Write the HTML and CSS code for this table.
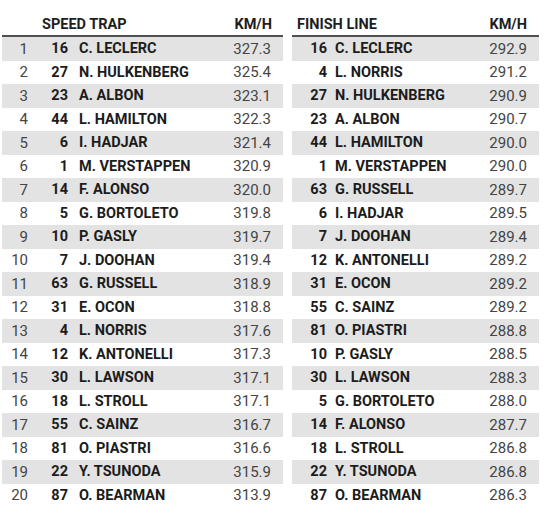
FILE: index.html
```html
<!DOCTYPE html>
<html lang="en">
<head>
<meta charset="UTF-8">
<meta name="viewport" content="width=device-width, initial-scale=1.0">
<title>Speed Trap / Finish Line</title>
<link rel="stylesheet" href="styles.css">
</head>
<body>

<div class="wrapper">
  <div class="board speed">
    <div class="head"><span class="title">SPEED TRAP</span><span class="unit">KM/H</span></div>
    <div class="row"><span class="pos">1</span><span class="no">16</span><span class="name">C. LECLERC</span><span class="kmh">327.3</span></div>
    <div class="row"><span class="pos">2</span><span class="no">27</span><span class="name">N. HULKENBERG</span><span class="kmh">325.4</span></div>
    <div class="row"><span class="pos">3</span><span class="no">23</span><span class="name">A. ALBON</span><span class="kmh">323.1</span></div>
    <div class="row"><span class="pos">4</span><span class="no">44</span><span class="name">L. HAMILTON</span><span class="kmh">322.3</span></div>
    <div class="row"><span class="pos">5</span><span class="no">6</span><span class="name">I. HADJAR</span><span class="kmh">321.4</span></div>
    <div class="row"><span class="pos">6</span><span class="no">1</span><span class="name">M. VERSTAPPEN</span><span class="kmh">320.9</span></div>
    <div class="row"><span class="pos">7</span><span class="no">14</span><span class="name">F. ALONSO</span><span class="kmh">320.0</span></div>
    <div class="row"><span class="pos">8</span><span class="no">5</span><span class="name">G. BORTOLETO</span><span class="kmh">319.8</span></div>
    <div class="row"><span class="pos">9</span><span class="no">10</span><span class="name">P. GASLY</span><span class="kmh">319.7</span></div>
    <div class="row"><span class="pos">10</span><span class="no">7</span><span class="name">J. DOOHAN</span><span class="kmh">319.4</span></div>
    <div class="row"><span class="pos">11</span><span class="no">63</span><span class="name">G. RUSSELL</span><span class="kmh">318.9</span></div>
    <div class="row"><span class="pos">12</span><span class="no">31</span><span class="name">E. OCON</span><span class="kmh">318.8</span></div>
    <div class="row"><span class="pos">13</span><span class="no">4</span><span class="name">L. NORRIS</span><span class="kmh">317.6</span></div>
    <div class="row"><span class="pos">14</span><span class="no">12</span><span class="name">K. ANTONELLI</span><span class="kmh">317.3</span></div>
    <div class="row"><span class="pos">15</span><span class="no">30</span><span class="name">L. LAWSON</span><span class="kmh">317.1</span></div>
    <div class="row"><span class="pos">16</span><span class="no">18</span><span class="name">L. STROLL</span><span class="kmh">317.1</span></div>
    <div class="row"><span class="pos">17</span><span class="no">55</span><span class="name">C. SAINZ</span><span class="kmh">316.7</span></div>
    <div class="row"><span class="pos">18</span><span class="no">81</span><span class="name">O. PIASTRI</span><span class="kmh">316.6</span></div>
    <div class="row"><span class="pos">19</span><span class="no">22</span><span class="name">Y. TSUNODA</span><span class="kmh">315.9</span></div>
    <div class="row"><span class="pos">20</span><span class="no">87</span><span class="name">O. BEARMAN</span><span class="kmh">313.9</span></div>
  </div>

  <div class="board finish">
    <div class="head"><span class="title">FINISH LINE</span><span class="unit">KM/H</span></div>
    <div class="row"><span class="no">16</span><span class="name">C. LECLERC</span><span class="kmh">292.9</span></div>
    <div class="row"><span class="no">4</span><span class="name">L. NORRIS</span><span class="kmh">291.2</span></div>
    <div class="row"><span class="no">27</span><span class="name">N. HULKENBERG</span><span class="kmh">290.9</span></div>
    <div class="row"><span class="no">23</span><span class="name">A. ALBON</span><span class="kmh">290.7</span></div>
    <div class="row"><span class="no">44</span><span class="name">L. HAMILTON</span><span class="kmh">290.0</span></div>
    <div class="row"><span class="no">1</span><span class="name">M. VERSTAPPEN</span><span class="kmh">290.0</span></div>
    <div class="row"><span class="no">63</span><span class="name">G. RUSSELL</span><span class="kmh">289.7</span></div>
    <div class="row"><span class="no">6</span><span class="name">I. HADJAR</span><span class="kmh">289.5</span></div>
    <div class="row"><span class="no">7</span><span class="name">J. DOOHAN</span><span class="kmh">289.4</span></div>
    <div class="row"><span class="no">12</span><span class="name">K. ANTONELLI</span><span class="kmh">289.2</span></div>
    <div class="row"><span class="no">31</span><span class="name">E. OCON</span><span class="kmh">289.2</span></div>
    <div class="row"><span class="no">55</span><span class="name">C. SAINZ</span><span class="kmh">289.2</span></div>
    <div class="row"><span class="no">81</span><span class="name">O. PIASTRI</span><span class="kmh">288.8</span></div>
    <div class="row"><span class="no">10</span><span class="name">P. GASLY</span><span class="kmh">288.5</span></div>
    <div class="row"><span class="no">30</span><span class="name">L. LAWSON</span><span class="kmh">288.3</span></div>
    <div class="row"><span class="no">5</span><span class="name">G. BORTOLETO</span><span class="kmh">288.0</span></div>
    <div class="row"><span class="no">14</span><span class="name">F. ALONSO</span><span class="kmh">287.7</span></div>
    <div class="row"><span class="no">18</span><span class="name">L. STROLL</span><span class="kmh">286.8</span></div>
    <div class="row"><span class="no">22</span><span class="name">Y. TSUNODA</span><span class="kmh">286.8</span></div>
    <div class="row"><span class="no">87</span><span class="name">O. BEARMAN</span><span class="kmh">286.3</span></div>
  </div>
</div>

</body>
</html>
```

FILE: styles.css
```css
* { margin: 0; padding: 0; box-sizing: border-box; }
body { font-family: Roboto, "Liberation Sans", sans-serif; background: #fff; color: #3c3c3c; }
.wrapper { display: flex; gap: 9px; padding-left: 2px; }

.board { display: flex; flex-direction: column; }
.speed { width: 281px; }
.finish { width: 247px; }

.head { display: flex; justify-content: space-between; height: 37px; padding-top: 15px; line-height: 20px; font-size: 14.5px; font-weight: bold; color: #1e1e1e; border-bottom: 2px solid #505050; }
.speed .head { padding-left: 40px; padding-right: 11px; }
.finish .head { padding-left: 5px; padding-right: 12px; }

.row { display: grid; align-items: center; height: 23.5px; font-size: 15px; }
.row:nth-child(even) { background: #e3e3e3; }
.speed .row { grid-template-columns: 26px 40px 1fr auto; padding-right: 12px; }
.finish .row { grid-template-columns: 35px 1fr auto; padding-right: 12px; }

.pos { text-align: right; color: #444; }
.no { text-align: right; font-weight: bold; font-size: 14.5px; color: #1c1c1c; }
.name { font-weight: bold; font-size: 14.5px; color: #1c1c1c; padding-left: 11px; }
.finish .name { padding-left: 8px; }
.kmh { text-align: right; color: #444; }
```
